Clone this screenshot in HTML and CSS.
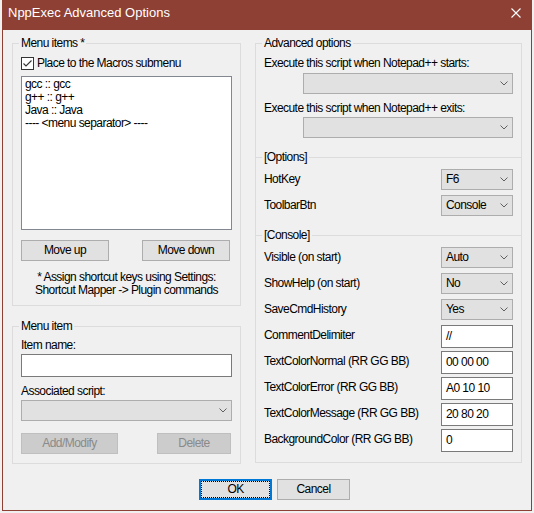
FILE: index.html
```html
<!DOCTYPE html>
<html>
<head>
<meta charset="utf-8">
<title>NppExec Advanced Options</title>
<link rel="stylesheet" href="styles.css">
</head>
<body>
<div class="window">
  <div class="titlebar">
    <span class="title">NppExec Advanced Options</span>
    <svg class="close" width="10" height="10" viewBox="0 0 10 10"><path d="M0.5 0.5L9.5 9.5M9.5 0.5L0.5 9.5" stroke="#fff" stroke-width="1.1" fill="none"/></svg>
  </div>
  <div class="client">
    <div class="columns">
      <div class="leftcol">
        <fieldset class="group g-items">
          <legend>Menu items *</legend>
          <label class="check"><span class="box"><svg width="11" height="11" viewBox="0 0 11 11"><path d="M1.5 5.5L4 8L9.5 2.5" stroke="#333" stroke-width="1.1" fill="none"/></svg></span>Place to the Macros submenu</label>
          <div class="listbox">
            <div>gcc :: gcc</div>
            <div>g++ :: g++</div>
            <div>Java :: Java</div>
            <div>---- &lt;menu separator&gt; ----</div>
          </div>
          <div class="btnrow moves">
            <button class="btn w88">Move up</button>
            <button class="btn w88">Move down</button>
          </div>
          <p class="note">* Assign shortcut keys using Settings:<br>Shortcut Mapper -&gt; Plugin commands</p>
        </fieldset>
        <fieldset class="group g-item">
          <legend>Menu item</legend>
          <div class="lbl">Item name:</div>
          <div class="edit full gap2"></div>
          <div class="lbl gap7">Associated script:</div>
          <div class="combo full gap2"><span class="val"></span><svg class="chev" width="8" height="5" viewBox="0 0 8 5"><path d="M0.5 0.5L4 4L7.5 0.5" stroke="#606060" fill="none"/></svg></div>
          <div class="btnrow edits">
            <button class="btn w97" disabled>Add/Modify</button>
            <button class="btn w74" disabled>Delete</button>
          </div>
        </fieldset>
      </div>
      <fieldset class="group g-adv">
        <legend>Advanced options</legend>
        <div class="lbl">Execute this script when Notepad++ starts:</div>
        <div class="combo wide gap3"><span class="val"></span><svg class="chev" width="8" height="5" viewBox="0 0 8 5"><path d="M0.5 0.5L4 4L7.5 0.5" stroke="#606060" fill="none"/></svg></div>
        <div class="lbl gap7">Execute this script when Notepad++ exits:</div>
        <div class="combo wide gap2"><span class="val"></span><svg class="chev" width="8" height="5" viewBox="0 0 8 5"><path d="M0.5 0.5L4 4L7.5 0.5" stroke="#606060" fill="none"/></svg></div>

        <div class="subhead first"><span>[Options]</span></div>
        <div class="rows">
          <div class="row"><span class="rl">HotKey</span><div class="combo"><span class="val">F6</span><svg class="chev" width="8" height="5" viewBox="0 0 8 5"><path d="M0.5 0.5L4 4L7.5 0.5" stroke="#606060" fill="none"/></svg></div></div>
          <div class="row"><span class="rl">ToolbarBtn</span><div class="combo"><span class="val">Console</span><svg class="chev" width="8" height="5" viewBox="0 0 8 5"><path d="M0.5 0.5L4 4L7.5 0.5" stroke="#606060" fill="none"/></svg></div></div>
        </div>

        <div class="subhead second"><span>[Console]</span></div>
        <div class="rows">
          <div class="row"><span class="rl">Visible (on start)</span><div class="combo"><span class="val">Auto</span><svg class="chev" width="8" height="5" viewBox="0 0 8 5"><path d="M0.5 0.5L4 4L7.5 0.5" stroke="#606060" fill="none"/></svg></div></div>
          <div class="row"><span class="rl">ShowHelp (on start)</span><div class="combo"><span class="val">No</span><svg class="chev" width="8" height="5" viewBox="0 0 8 5"><path d="M0.5 0.5L4 4L7.5 0.5" stroke="#606060" fill="none"/></svg></div></div>
          <div class="row"><span class="rl">SaveCmdHistory</span><div class="combo"><span class="val">Yes</span><svg class="chev" width="8" height="5" viewBox="0 0 8 5"><path d="M0.5 0.5L4 4L7.5 0.5" stroke="#606060" fill="none"/></svg></div></div>
          <div class="row"><span class="rl">CommentDelimiter</span><div class="edit">//</div></div>
          <div class="row"><span class="rl">TextColorNormal (RR GG BB)</span><div class="edit">00 00 00</div></div>
          <div class="row"><span class="rl">TextColorError (RR GG BB)</span><div class="edit">A0 10 10</div></div>
          <div class="row"><span class="rl">TextColorMessage (RR GG BB)</span><div class="edit">20 80 20</div></div>
          <div class="row"><span class="rl">BackgroundColor (RR GG BB)</span><div class="edit">0</div></div>
        </div>
      </fieldset>
    </div>
    <div class="footer">
      <button class="btn dlg ok">OK</button>
      <button class="btn dlg">Cancel</button>
    </div>
  </div>
</div>
</body>
</html>
```

FILE: styles.css
```css
* { box-sizing: border-box; }
html, body { margin: 0; padding: 0; }
body {
  width: 534px;
  height: 513px;
  overflow: hidden;
  background: #f0f0f0;
  font-family: "Liberation Sans", Arial, sans-serif;
  font-size: 12px;
  line-height: 14px;
  letter-spacing: -0.55px;
  color: #000;
}
.window {
  margin-left: 2px;
  width: 530px;
  height: 511px;
  border: 1px solid #8e4034;
  border-top: 0;
  display: flex;
  flex-direction: column;
  background: #f0f0f0;
}
.titlebar {
  height: 30px;
  margin: 0 -1px;
  background: #8e4034;
  color: #fff;
  display: flex;
  align-items: center;
  justify-content: space-between;
  padding: 0 11px 4px 6px;
}
.title { font-size: 13px; letter-spacing: 0; }
.close { display: block; }
.client {
  flex: 1;
  padding: 6px 0 0 9px;
}
.columns {
  display: flex;
  align-items: flex-start;
  gap: 14px;
}
.leftcol {
  width: 229px;
  display: flex;
  flex-direction: column;
  gap: 13px;
}
.group {
  margin: 0;
  min-width: 0;
  border: 1px solid #dcdcdc;
  padding: 6px 8px 8px;
}
.group legend {
  padding: 0 2px;
  margin-left: -2px;
  line-height: 14px;
}
.g-item { padding: 5px 8px 9px; }
.g-adv { width: 267px; padding: 6px 8px 7px; }

.check {
  display: flex;
  align-items: center;
  gap: 3px;
  height: 14px;
}
.box {
  width: 13px;
  height: 13px;
  border: 1px solid #333;
  background: #fff;
  display: flex;
  align-items: center;
  justify-content: center;
}
.box svg { display: block; }
.listbox {
  margin-top: 6px;
  height: 154px;
  border: 1px solid #828790;
  background: #fff;
  padding: 1px 3px;
  line-height: 13px;
}
.btnrow { display: flex; }
.moves { margin-top: 10px; gap: 33px; }
.edits { margin-top: 12px; gap: 39px; }
.btn {
  height: 21px;
  padding: 0;
  border: 1px solid #adadad;
  background: #e1e1e1;
  color: #000;
  font-family: inherit;
  font-size: 12px;
  letter-spacing: inherit;
  line-height: 19px;
}
.btn:disabled {
  background: #cccccc;
  border-color: #bfbfbf;
  color: #8a8a8a;
}
.w88 { width: 88px; }
.w97 { width: 97px; }
.w74 { width: 74px; }
.note {
  margin: 10px 0 0;
  text-align: center;
  line-height: 13px;
}
.lbl { line-height: 14px; }
.gap2 { margin-top: 2px; }
.gap3 { margin-top: 3px; }
.gap7 { margin-top: 7px; }

.edit {
  height: 23px;
  border: 1px solid #7a7a7a;
  background: #fff;
  padding: 0 4px;
  line-height: 21px;
}
.combo {
  height: 21px;
  border: 1px solid #adadad;
  background: #e1e1e1;
  display: flex;
  align-items: center;
  padding: 0 4px 0 4px;
}
.combo .val { flex: 1; line-height: 19px; }
.combo .chev { display: block; margin-right: 0; }
.full { width: 211px; }
.wide { width: 210px; margin-left: auto; }

.subhead {
  display: flex;
  align-items: center;
  height: 14px;
  margin-left: -8px;
  margin-right: -8px;
}
.subhead::before {
  content: "";
  width: 6px;
  border-top: 1px solid #dcdcdc;
}
.subhead::after {
  content: "";
  flex: 1;
  border-top: 1px solid #dcdcdc;
}
.subhead span { padding: 0 2px; }
.subhead.first { margin-top: 12px; }
.subhead.second { margin-top: 7px; }
.rows { margin-top: 5px; }
.row {
  display: grid;
  grid-template-columns: 1fr 72px;
  height: 26px;
  align-items: start;
}
.rl { line-height: 21px; }

.footer {
  display: flex;
  gap: 5px;
  margin-top: 15px;
  padding-left: 187px;
}
.dlg { width: 73px; }
.ok {
  border: 2px solid #0078d7;
  outline: 1px dotted #000;
  outline-offset: -3px;
  line-height: 17px;
}
```
